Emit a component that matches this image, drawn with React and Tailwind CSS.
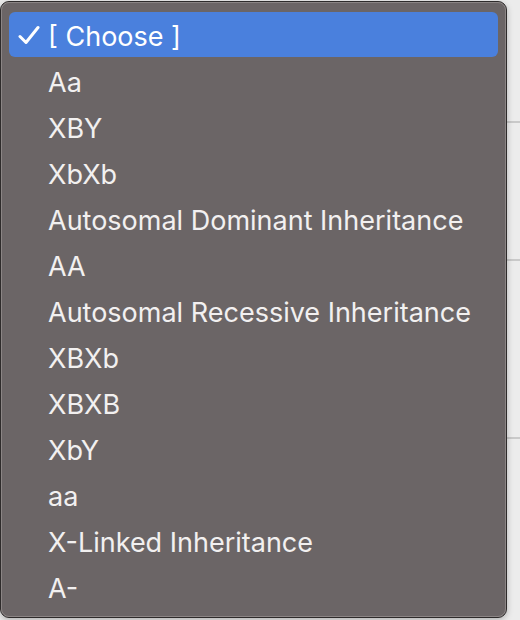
import React from "react";

const items = [
  "Aa",
  "XBY",
  "XbXb",
  "Autosomal Dominant Inheritance",
  "AA",
  "Autosomal Recessive Inheritance",
  "XBXb",
  "XBXB",
  "XbY",
  "aa",
  "X-Linked Inheritance",
  "A-",
];

export default function App() {
  return (
    <div
      className="relative w-[520px] h-[620px] overflow-hidden bg-[#ececec]"
      style={{ fontFamily: "Inter, 'Noto Sans', sans-serif" }}
    >
      <div className="flex flex-col">
        <div className="h-[121px]" />
        <div className="h-[2px] bg-[#c9c9c9]" />
        <div className="h-[136px]" />
        <div className="h-[2px] bg-[#c9c9c9]" />
        <div className="h-[176px]" />
        <div className="h-[2px] bg-[#c9c9c9]" />
      </div>

      <div className="absolute left-0 top-[1px] w-[507px] h-[617px] rounded-[9px] border border-[#2e2b2b] bg-[#6b6566] shadow-[0_2px_6px_rgba(0,0,0,0.25)]">
        <div className="h-full w-full rounded-[8px] border border-[#8b8585] pt-[9px] pb-1 pl-[7px] pr-[7px] flex flex-col">
          <div className="flex items-center h-[45px] rounded-[6px] bg-[#4a80dd] text-[#ffffff] mb-px">
            <svg
              className="ml-[9px] mr-[8px]"
              width="22"
              height="22"
              viewBox="0 0 22 22"
              fill="none"
            >
              <path
                d="M2 12.5 L8 18.5 L20 3.5"
                stroke="#ffffff"
                strokeWidth="3"
                strokeLinecap="round"
                strokeLinejoin="round"
              />
            </svg>
            <span className="text-[27px] leading-none pt-[3px]">[ Choose ]</span>
          </div>
          {items.map((t) => (
            <div
              key={t}
              className="flex items-center h-[46px] pl-[39px] text-[27px] leading-none text-[#f2f0f0]"
            >
              <span className="pt-[3px]">{t}</span>
            </div>
          ))}
        </div>
      </div>
    </div>
  );
}
